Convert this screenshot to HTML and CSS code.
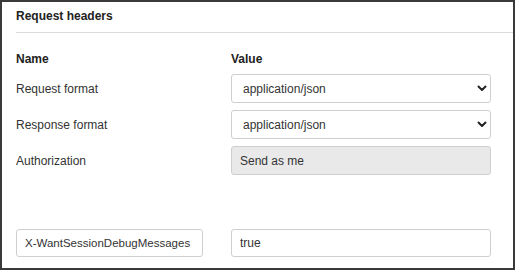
FILE: index.html
```html
<!DOCTYPE html>
<html>
<head>
  <meta charset="UTF-8">
  <meta name="viewport" content="width=device-width, initial-scale=1.0">
  <link rel="stylesheet" href="styles.css">
</head>
<body>
  <div class="panel">
    <div class="panel-title">Request headers</div>

    <div class="header-grid">
      <div class="col-head">Name</div>
      <div class="col-head">Value</div>

      <label class="field-label" for="reqFormat">Request format</label>
      <div class="select-wrap">
        <select id="reqFormat" class="form-select">
          <option>application/json</option>
          <option>application/xml</option>
        </select>
        <svg class="chevron" width="10" height="7" viewBox="0 0 10 7">
          <path d="M1.5 1.5 L5 5 L8.5 1.5" fill="none" stroke="#222" stroke-width="2" stroke-linecap="round" stroke-linejoin="round"/>
        </svg>
      </div>

      <label class="field-label" for="resFormat">Response format</label>
      <div class="select-wrap">
        <select id="resFormat" class="form-select">
          <option>application/json</option>
          <option>application/xml</option>
        </select>
        <svg class="chevron" width="10" height="7" viewBox="0 0 10 7">
          <path d="M1.5 1.5 L5 5 L8.5 1.5" fill="none" stroke="#222" stroke-width="2" stroke-linecap="round" stroke-linejoin="round"/>
        </svg>
      </div>

      <label class="field-label" for="auth">Authorization</label>
      <input id="auth" class="form-input" type="text" value="Send as me" disabled>

      <div class="spacer"></div>
      <div class="spacer"></div>

      <input class="form-input header-name" type="text" value="X-WantSessionDebugMessages">
      <input class="form-input header-value" type="text" value="true">
    </div>
  </div>
</body>
</html>
```

FILE: styles.css
```css
* {
  box-sizing: border-box;
  margin: 0;
  padding: 0;
}

body {
  font-family: "Liberation Sans", Arial, sans-serif;
  font-size: 12px;
  color: #333;
  background: #ffffff;
}

.panel {
  width: 515px;
  height: 270px;
  border: 2px solid #3a3a3a;
  background: #fff;
  overflow: hidden;
}

.panel-title {
  margin-left: 14px;
  padding: 6px 0 8px;
  line-height: 16px;
  font-weight: bold;
  color: #222;
  border-bottom: 1px solid #dadada;
}

.header-grid {
  display: grid;
  grid-template-columns: 215px 260px;
  row-gap: 7px;
  margin: 19px 0 0 14px;
}

.col-head {
  font-weight: bold;
  color: #222;
  line-height: 15px;
}

.field-label {
  align-self: center;
  line-height: 16px;
}

.select-wrap {
  position: relative;
}

.form-select,
.form-input {
  display: block;
  width: 100%;
  height: 29px;
  font-family: inherit;
  font-size: 12px;
  color: #333;
  background: #fff;
  border: 1px solid #cfcfcf;
  border-radius: 3px;
  outline: none;
}

.form-select {
  -webkit-appearance: none;
  appearance: none;
  padding: 0 24px 0 11px;
}

.chevron {
  position: absolute;
  right: 4px;
  top: 11px;
  pointer-events: none;
}

.form-input {
  padding: 0 8px;
}

.form-input:disabled {
  background: #e9e9e9;
  color: #333;
  opacity: 1;
}

.spacer {
  height: 40px;
}

.header-name {
  width: 187px;
  height: 28px;
  padding: 0 4px 0 8px;
  font-size: 11.5px;
}

.header-value {
  height: 28px;
}
```
